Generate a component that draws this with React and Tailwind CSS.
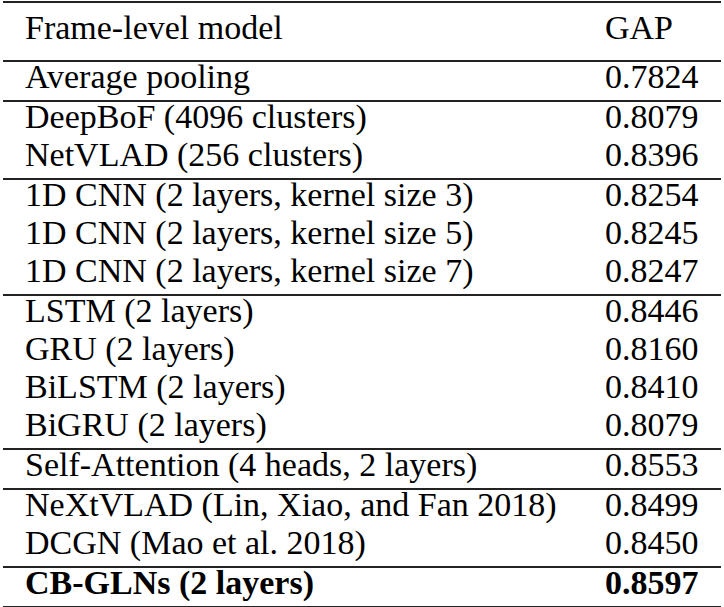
import React from 'react';

const groups = [
  [['Average pooling', '0.7824']],
  [
    ['DeepBoF (4096 clusters)', '0.8079'],
    ['NetVLAD (256 clusters)', '0.8396'],
  ],
  [
    ['1D CNN (2 layers, kernel size 3)', '0.8254'],
    ['1D CNN (2 layers, kernel size 5)', '0.8245'],
    ['1D CNN (2 layers, kernel size 7)', '0.8247'],
  ],
  [
    ['LSTM (2 layers)', '0.8446'],
    ['GRU (2 layers)', '0.8160'],
    ['BiLSTM (2 layers)', '0.8410'],
    ['BiGRU (2 layers)', '0.8079'],
  ],
  [['Self-Attention (4 heads, 2 layers)', '0.8553']],
  [
    ['NeXtVLAD (Lin, Xiao, and Fan 2018)', '0.8499'],
    ['DCGN (Mao et al. 2018)', '0.8450'],
  ],
];

function Rule() {
  return <div className="h-[2px] bg-[#222]" />;
}

function Row({ name, gap, bold }) {
  return (
    <div className={`flex h-[38px] leading-[29px] ${bold ? 'font-bold' : ''}`}>
      <div className="w-[602px] pl-[22px] whitespace-nowrap">{name}</div>
      <div className="whitespace-nowrap">{gap}</div>
    </div>
  );
}

export default function App() {
  return (
    <div className="w-[724px] h-[607px] bg-white overflow-hidden">
      <div className="mx-[3px] mt-px text-[34px] text-black font-['Liberation_Serif']">
        <Rule />
        <div className="flex h-[57px] leading-[29px] pt-[10px]">
          <div className="w-[602px] pl-[22px]">Frame-level model</div>
          <div>GAP</div>
        </div>
        {groups.map((g, i) => (
          <div key={i}>
            <Rule />
            {g.map(([name, gap]) => (
              <Row key={name} name={name} gap={gap} />
            ))}
          </div>
        ))}
        <Rule />
        <Row name="CB-GLNs (2 layers)" gap="0.8597" bold />
        <Rule />
      </div>
    </div>
  );
}
